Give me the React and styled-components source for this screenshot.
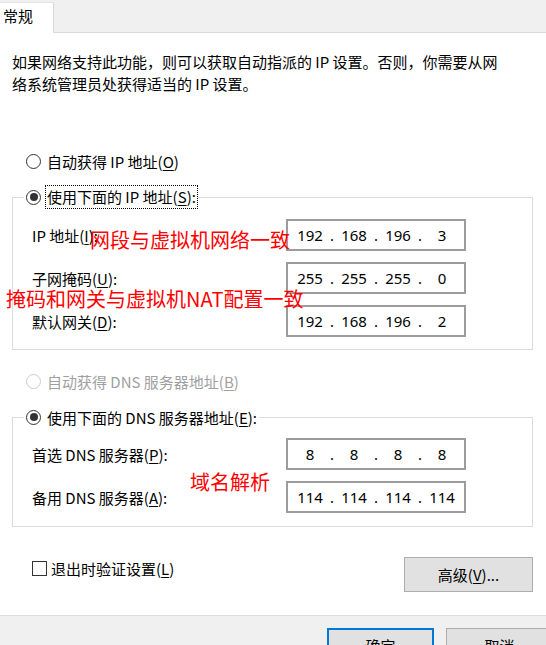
import React from "react";
import styled, { createGlobalStyle } from "styled-components";

const GlobalStyle = createGlobalStyle`
  html, body {
    margin: 0;
    padding: 0;
    background: #fff;
  }
  body {
    font-family: "Noto Sans CJK SC", "Noto Sans", sans-serif;
    font-size: 15px;
    color: #000;
  }
`;

const Window = styled.div`
  position: relative;
  width: 546px;
  height: 645px;
  overflow: hidden;
  display: flex;
  flex-direction: column;
  background: #fff;
`;

const TabBar = styled.div`
  height: 32px;
  background: #f0f0f0;
  border-bottom: 1px solid #dadada;
  display: flex;
  align-items: flex-end;
  flex: 0 0 auto;
`;

const Tab = styled.div`
  width: 50px;
  height: 30px;
  margin-bottom: -1px;
  padding-left: 3px;
  background: #fff;
  border-top: 1px solid #e3e3e3;
  border-right: 1px solid #dadada;
  line-height: 26px;
`;

const Panel = styled.main`
  flex: 1;
  padding: 18px 13px 0 12px;
  display: flex;
  flex-direction: column;
`;

const Description = styled.p`
  margin: 0;
  line-height: 22px;
  white-space: nowrap;
`;

const RadioRow = styled.div`
  display: flex;
  align-items: center;
  gap: 6px;
  height: 22px;
  margin: ${(p) => p.$mt}px 0 0 14px;
  color: ${(p) => (p.$disabled ? "#a0a0a0" : "#000")};
`;

const Radio = styled.span`
  width: 15px;
  height: 15px;
  box-sizing: border-box;
  border-radius: 50%;
  border: 1px solid ${(p) => (p.$disabled ? "#cccccc" : "#333")};
  background: #fff;
  display: grid;
  place-items: center;
  flex: 0 0 auto;

  &::after {
    content: "";
    width: 8px;
    height: 8px;
    border-radius: 50%;
    background: #333;
    display: ${(p) => (p.$checked ? "block" : "none")};
  }
`;

const Group = styled.fieldset`
  margin: ${(p) => p.$mt}px 0 0;
  padding: 0;
  border: 1px solid #dcdcdc;
  min-width: 0;
`;

const Legend = styled.legend`
  display: flex;
  align-items: center;
  gap: 6px;
  height: 22px;
  padding: 0 2px;
  margin-left: 11px;
`;

const FocusText = styled.span`
  outline: 1px dotted #000;
  outline-offset: 1px;
  line-height: 20px;
`;

const Key = styled.u`
  text-underline-offset: 2px;
`;

const FieldRows = styled.div`
  display: grid;
  grid-template-columns: 254px 180px;
  row-gap: 11px;
  align-items: center;
  padding: ${(p) => p.$pt}px 0 ${(p) => p.$pb}px 19px;
`;

const FieldLabel = styled.span`
  white-space: nowrap;
`;

const IpBox = styled.div`
  width: 180px;
  height: 32px;
  box-sizing: border-box;
  border: 2px solid #9c9c9c;
  padding: 0 4px;
  display: grid;
  grid-template-columns: 36px 8px 36px 8px 36px 8px 36px;
  align-items: center;
  text-align: center;
  background: #fff;
  font-family: "Noto Sans", "Noto Sans CJK SC", sans-serif;
  font-size: 15px;
`;

const BottomRow = styled.div`
  display: flex;
  justify-content: space-between;
  align-items: flex-start;
  margin-top: 30px;
  padding-left: 20px;
`;

const CheckRow = styled.div`
  display: flex;
  align-items: center;
  gap: 4px;
  height: 22px;
  margin-top: 0;
`;

const CheckBox = styled.span`
  width: 15px;
  height: 15px;
  box-sizing: border-box;
  border: 1px solid #333;
  background: #fff;
`;

const Button = styled.button`
  width: ${(p) => p.$w}px;
  height: 35px;
  flex: 0 0 auto;
  box-sizing: border-box;
  padding: 0;
  background: #e1e1e1;
  border: ${(p) => (p.$primary ? "2px solid #0078d7" : "1px solid #adadad")};
  font: inherit;
  color: #000;
`;

const Footer = styled.footer`
  flex: 0 0 auto;
  height: 30px;
  box-sizing: border-box;
  padding-top: 12px;
  background: #f0f0f0;
  border-top: 1px solid #dfdfdf;
  display: flex;
  justify-content: flex-end;
  align-items: flex-start;
  gap: 12px;
  margin-right: -7px;
`;

const Note = styled.span`
  position: absolute;
  left: ${(p) => p.$x}px;
  top: ${(p) => p.$y}px;
  color: #ff0000;
  font-size: 20px;
  line-height: 28px;
  white-space: nowrap;
`;

function IpField({ parts }) {
  return (
    <IpBox>
      {parts.map((part, i) => (
        <React.Fragment key={i}>
          {i > 0 && <span>.</span>}
          <span>{part}</span>
        </React.Fragment>
      ))}
    </IpBox>
  );
}

const ipRows = [
  { label: "IP 地址", key: "I", parts: ["192", "168", "196", "3"] },
  { label: "子网掩码", key: "U", parts: ["255", "255", "255", "0"] },
  { label: "默认网关", key: "D", parts: ["192", "168", "196", "2"] },
];

const dnsRows = [
  { label: "首选 DNS 服务器", key: "P", parts: ["8", "8", "8", "8"] },
  { label: "备用 DNS 服务器", key: "A", parts: ["114", "114", "114", "114"] },
];

function Rows({ rows, pt, pb }) {
  return (
    <FieldRows $pt={pt} $pb={pb}>
      {rows.map((r) => (
        <React.Fragment key={r.key}>
          <FieldLabel>
            {r.label}(<Key>{r.key}</Key>):
          </FieldLabel>
          <IpField parts={r.parts} />
        </React.Fragment>
      ))}
    </FieldRows>
  );
}

export default function App() {
  return (
    <Window>
      <GlobalStyle />
      <TabBar>
        <Tab>常规</Tab>
      </TabBar>

      <Panel>
        <Description>
          如果网络支持此功能，则可以获取自动指派的 IP 设置。否则，你需要从网
          <br />
          络系统管理员处获得适当的 IP 设置。
        </Description>

        <RadioRow $mt={55}>
          <Radio />
          <span>
            自动获得 IP 地址(<Key>O</Key>)
          </span>
        </RadioRow>

        <Group $mt={14}>
          <Legend>
            <Radio $checked />
            <FocusText>
              使用下面的 IP 地址(<Key>S</Key>):
            </FocusText>
          </Legend>
          <Rows rows={ipRows} pt={11} pb={12} />
        </Group>

        <RadioRow $mt={20} $disabled>
          <Radio $disabled />
          <span>
            自动获得 DNS 服务器地址(<Key>B</Key>)
          </span>
        </RadioRow>

        <Group $mt={14}>
          <Legend>
            <Radio $checked />
            <span>
              使用下面的 DNS 服务器地址(<Key>E</Key>):
            </span>
          </Legend>
          <Rows rows={dnsRows} pt={10} pb={13} />
        </Group>

        <BottomRow>
          <CheckRow>
            <CheckBox />
            <span>
              退出时验证设置(<Key>L</Key>)
            </span>
          </CheckRow>
          <Button $w={129}>
            高级(<Key>V</Key>)...
          </Button>
        </BottomRow>
      </Panel>

      <Footer>
        <Button $w={107} $primary>
          确定
        </Button>
        <Button $w={107}>取消</Button>
      </Footer>

      <Note $x={90} $y={226}>网段与虚拟机网络一致</Note>
      <Note $x={6} $y={285}>掩码和网关与虚拟机NAT配置一致</Note>
      <Note $x={190} $y={468}>域名解析</Note>
    </Window>
  );
}
